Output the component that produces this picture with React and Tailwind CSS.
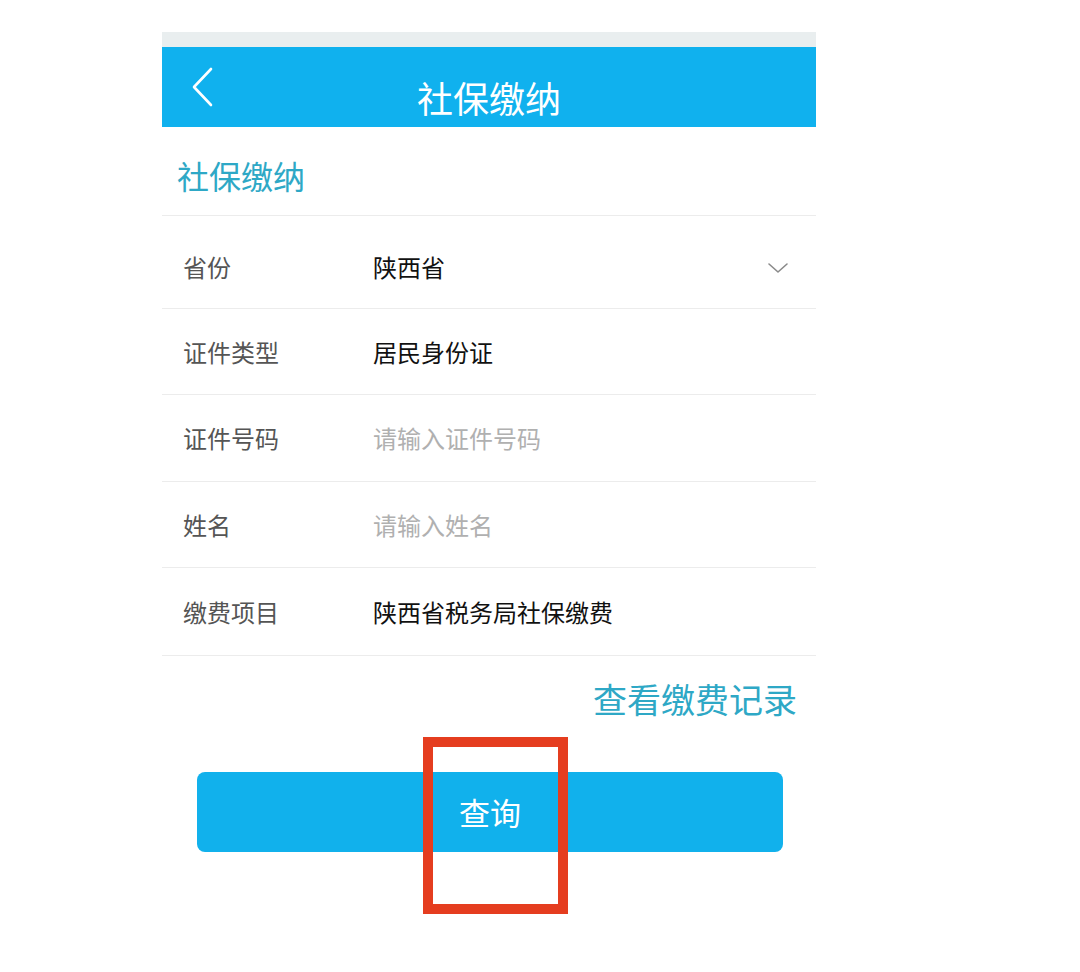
import React from 'react';

const rows = [
  { label: '省份', value: '陕西省', select: true, height: 'h-[93px]', pad: 'pt-[10px]' },
  { label: '证件类型', value: '居民身份证', height: 'h-[86px]' },
  { label: '证件号码', placeholder: '请输入证件号码', height: 'h-[87px]' },
  { label: '姓名', placeholder: '请输入姓名', height: 'h-[86px]' },
  { label: '缴费项目', value: '陕西省税务局社保缴费', height: 'h-[88px]' },
];

const ChevronLeft = () => (
  <svg width="24" height="40" viewBox="0 0 24 40" fill="none">
    <polyline points="20,2 3,20 20,38" stroke="#ffffff" strokeWidth="2.6" strokeLinecap="round" strokeLinejoin="round" />
  </svg>
);

const ChevronDown = () => (
  <svg width="24" height="14" viewBox="0 0 24 14" fill="none">
    <polyline points="3,3 12,11 21,3" stroke="#8a8a8a" strokeWidth="1.6" strokeLinecap="round" strokeLinejoin="round" />
  </svg>
);

const App = () => {
  return (
    <div className="min-h-[972px] w-[1080px] bg-white font-['Noto_Sans_CJK_SC','Noto_Sans',sans-serif]">
      <div className="ml-[162px] w-[654px] pt-[32px]">
        {/* status strip */}
        <div className="h-[15px] bg-[#e9eeef]"></div>

        {/* Header */}
        <div className="relative h-[80px] bg-[#10b1ee]">
          <div className="absolute left-[29px] top-[20px]">
            <ChevronLeft />
          </div>
          <div className="flex h-full items-end justify-center pb-[6px]">
            <span className="text-[36px] leading-[48px] text-white">社保缴纳</span>
          </div>
        </div>

        {/* Section title */}
        <div className="flex h-[89px] items-center border-b border-[#ececec] pl-[15px] pt-[8px]">
          <span className="text-[32px] leading-[40px] text-[#2ea8c6]">社保缴纳</span>
        </div>

        {/* Form rows */}
        {rows.map((row) => (
          <div
            key={row.label}
            className={`flex items-center border-b border-[#ececec] pl-[21px] pr-[26px] ${row.height} ${row.pad || ''}`}
          >
            <span className="w-[190px] text-[24px] leading-[32px] text-[#555555]">{row.label}</span>
            {row.value ? (
              <span className="flex-1 text-[24px] leading-[32px] text-[#111111]">{row.value}</span>
            ) : (
              <span className="flex-1 text-[24px] leading-[32px] text-[#b0b0b0]">{row.placeholder}</span>
            )}
            {row.select && (
              <div className="mt-[2px]">
                <ChevronDown />
              </div>
            )}
          </div>
        ))}

        {/* Record link */}
        <div className="flex h-[84px] items-center justify-end pr-[19px] pt-[2px]">
          <span className="text-[34px] leading-[44px] text-[#2ea8c6]">查看缴费记录</span>
        </div>

        {/* Query button */}
        <div className="relative mt-[32px] ml-[35px] w-[586px]">
          <button className="flex h-[80px] w-full items-center justify-center rounded-[8px] bg-[#11b1ec]">
            <span className="text-[31px] leading-[40px] text-white">查询</span>
          </button>
          {/* highlight annotation */}
          <div className="absolute left-[226px] top-[-35px] h-[177px] w-[145px] border-[10px] border-[#e53d1f]"></div>
        </div>
      </div>
    </div>
  );
};

export default App;
